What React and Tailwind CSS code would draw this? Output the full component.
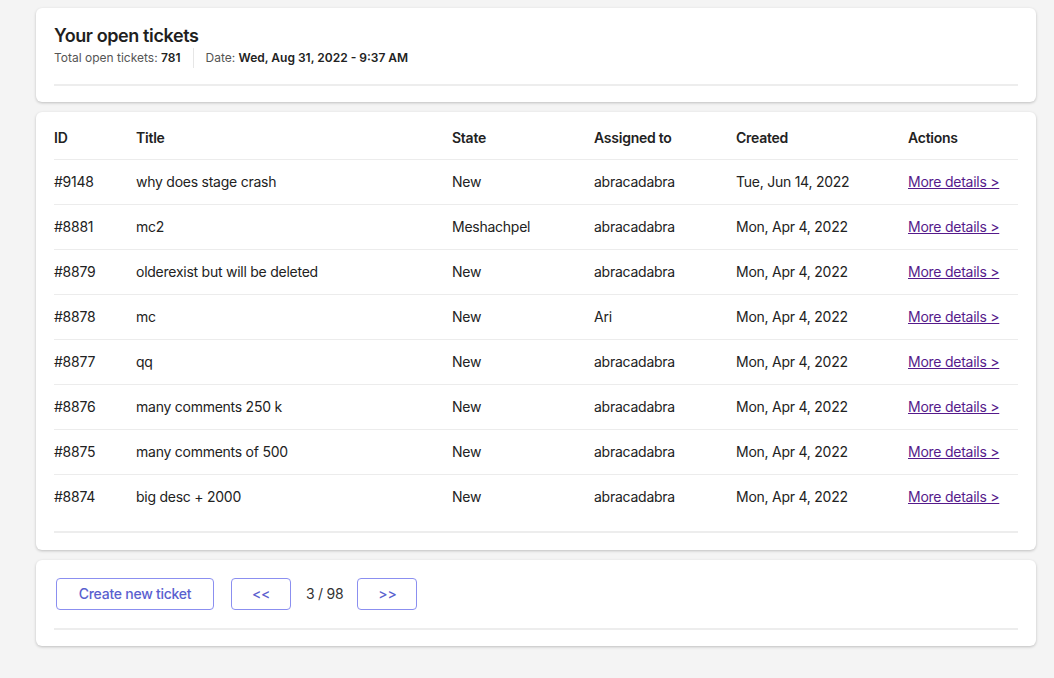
import React from "react";

const tickets = [
  { id: "#9148", title: "why does stage crash", state: "New", assigned: "abracadabra", created: "Tue, Jun 14, 2022" },
  { id: "#8881", title: "mc2", state: "Meshachpel", assigned: "abracadabra", created: "Mon, Apr 4, 2022" },
  { id: "#8879", title: "olderexist but will be deleted", state: "New", assigned: "abracadabra", created: "Mon, Apr 4, 2022" },
  { id: "#8878", title: "mc", state: "New", assigned: "Ari", created: "Mon, Apr 4, 2022" },
  { id: "#8877", title: "qq", state: "New", assigned: "abracadabra", created: "Mon, Apr 4, 2022" },
  { id: "#8876", title: "many comments 250 k", state: "New", assigned: "abracadabra", created: "Mon, Apr 4, 2022" },
  { id: "#8875", title: "many comments of 500", state: "New", assigned: "abracadabra", created: "Mon, Apr 4, 2022" },
  { id: "#8874", title: "big desc + 2000", state: "New", assigned: "abracadabra", created: "Mon, Apr 4, 2022" },
];

const cols = "grid grid-cols-[82px_316px_142px_142px_172px_110px]";

const Card = ({ className, children }) => (
  <div
    className={`bg-white rounded-md shadow-[0_1px_3px_rgba(0,0,0,0.22)] px-[18px] ${className}`}
  >
    {children}
  </div>
);

export default function App() {
  return (
    <div
      className="min-h-[678px] bg-[#f4f4f4] pt-2 pl-9 pr-[18px] text-[#222] tracking-[-0.25px]"
      style={{ fontFamily: "Inter, 'Noto Sans', sans-serif" }}
    >
      <div className="w-[1000px] flex flex-col gap-[10px]">
        {/* header */}
        <Card className="pt-4 pb-4">
          <h1 className="text-lg leading-6 font-semibold text-[#1f1f1f] tracking-[-0.4px]">
            Your open tickets
          </h1>
          <div className="flex items-center h-4 text-xs leading-4 mt-[2px] text-[#555] tracking-normal">
            <span>
              Total open tickets: <b className="font-semibold text-[#222]">781</b>
            </span>
            <span className="mx-3 h-5 w-px bg-[#e6e6e6]" />
            <span>
              Date: <b className="font-semibold text-[#222]">Wed, Aug 31, 2022 - 9:37 AM</b>
            </span>
          </div>
          <div className="mt-[18px] h-[2px] bg-[#ededed]" />
        </Card>

        {/* table */}
        <Card className="pt-1 pb-[17px]">
          <div className={`${cols} h-11 items-center text-sm font-semibold border-b border-[#ececec]`}>
            <div>ID</div>
            <div>Title</div>
            <div>State</div>
            <div>Assigned to</div>
            <div>Created</div>
            <div>Actions</div>
          </div>
          {tickets.map((t, idx) => (
            <div
              key={t.id}
              className={`${cols} items-center text-sm ${
                idx < tickets.length - 1 ? "border-b border-[#ececec] h-[45px]" : "h-11"
              }`}
            >
              <div>{t.id}</div>
              <div>{t.title}</div>
              <div>{t.state}</div>
              <div>{t.assigned}</div>
              <div>{t.created}</div>
              <div>
                <a href="#" className="text-[#551a8b] underline">
                  More details &gt;
                </a>
              </div>
            </div>
          ))}
          <div className="mt-3 h-[2px] bg-[#ededed]" />
        </Card>

        {/* pagination */}
        <Card className="pt-[18px] pb-4">
          <div className="flex items-center pl-[2px] text-sm">
            <button className="h-8 w-[158px] rounded border border-[#8b8ff0] text-[#5a5fcf] font-medium">
              Create new ticket
            </button>
            <button className="ml-[17px] h-8 w-[60px] rounded border border-[#8b8ff0] text-[#5a5fcf] font-medium">
              &lt;&lt;
            </button>
            <span className="ml-[15px] text-[#333]">3 / 98</span>
            <button className="ml-[14px] h-8 w-[60px] rounded border border-[#8b8ff0] text-[#5a5fcf] font-medium">
              &gt;&gt;
            </button>
          </div>
          <div className="mt-[18px] h-[2px] bg-[#ededed]" />
        </Card>
      </div>
    </div>
  );
}
